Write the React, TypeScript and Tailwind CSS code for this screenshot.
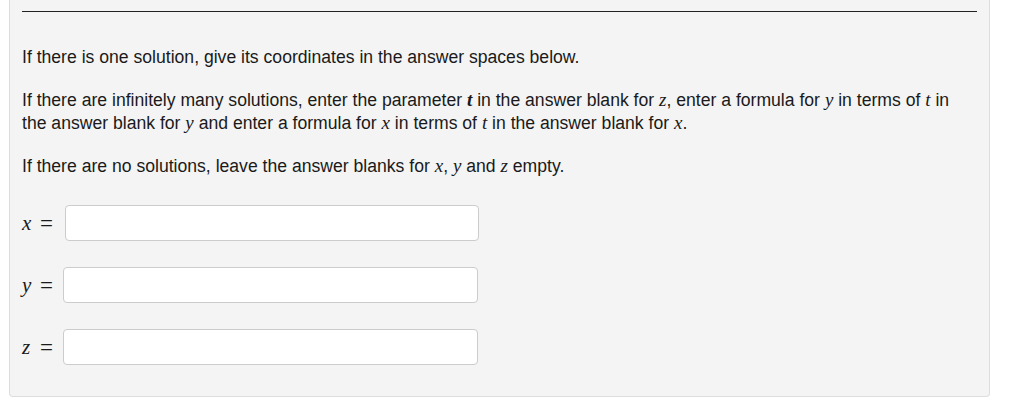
import React from 'react';

const M = ({ children, bold }: { children: React.ReactNode; bold?: boolean }) => (
  <span className={`font-['Liberation_Serif',serif] italic text-[19px] leading-none ${bold ? 'font-bold' : 'font-normal'}`}>{children}</span>
);

const rows = [
  { v: 'x', w: 'ml-[12px] w-[414px]' },
  { v: 'y', w: 'ml-[10px] w-[415px]' },
  { v: 'z', w: 'ml-[10px] w-[415px]' },
];

export default function App() {
  return (
    <div className="bg-white min-h-[408px] font-['Liberation_Sans',Arial,sans-serif] text-[17.6px] leading-[23px] text-[#1a1a1a]">
      <div className="ml-[9px] w-[981px] bg-[#f4f4f4] border-x border-b border-[#dddddd] rounded-b-[4px] px-[12px] pt-[11px] pb-[31px]">
        <div className="h-px bg-[#222]" />

        <p className="mt-[34px]">If there is one solution, give its coordinates in the answer spaces below.</p>
        <p className="mt-[20px]">
          If there are infinitely many solutions, enter the parameter <M bold>t</M> in the answer blank for <M>z</M>, enter a
          formula for <M>y</M> in terms of <M>t</M> in the answer blank for <M>y</M> and enter a formula for <M>x</M> in terms of{' '}
          <M>t</M> in the answer blank for <M>x</M>.
        </p>
        <p className="mt-[20px]">
          If there are no solutions, leave the answer blanks for <M>x</M>, <M>y</M> and <M>z</M> empty.
        </p>

        <div className="mt-[27px] flex flex-col gap-[26px]">
          {rows.map((r) => (
            <div key={r.v} className="flex items-center h-[36px]">
              <span className="flex items-center leading-none font-['Liberation_Serif',serif]">
                <span className="italic text-[21px] w-[11px]">{r.v}</span>
                <span className="ml-[7px] text-[23px]">=</span>
              </span>
              <input
                type="text"
                className={`${r.w} h-[36px] bg-white border border-[#cccccc] rounded-[4px] outline-none`}
              />
            </div>
          ))}
        </div>
      </div>
    </div>
  );
}
